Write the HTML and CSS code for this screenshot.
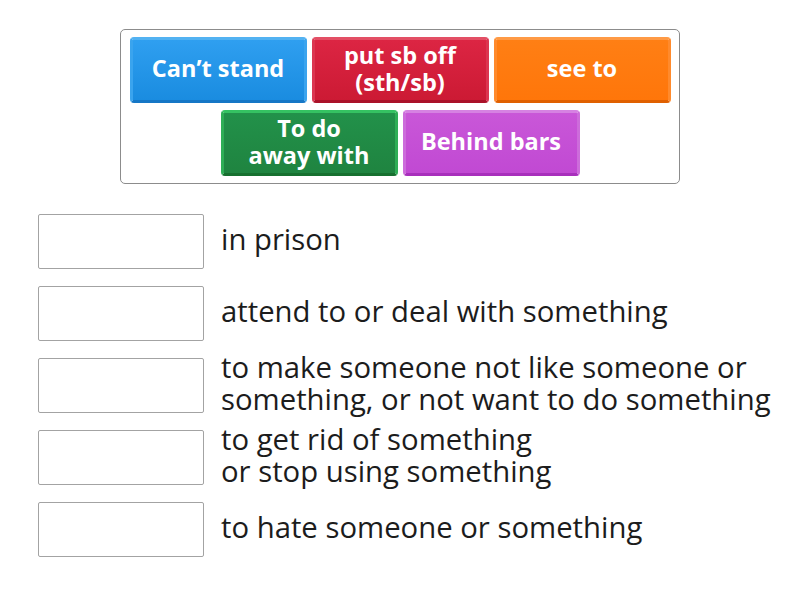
FILE: index.html
```html
<!DOCTYPE html>
<html>
<head>
<meta charset="utf-8">
<link rel="stylesheet" href="styles.css">
</head>
<body>
<div class="bank">
  <div class="tile blue"><span>Can’t stand</span></div>
  <div class="tile red"><span>put sb off<br>(sth/sb)</span></div>
  <div class="tile orange"><span>see to</span></div>
  <div class="tile green"><span>To do<br>away with</span></div>
  <div class="tile purple"><span>Behind bars</span></div>
</div>
<div class="rows">
  <div class="row"><div class="slot"></div><div class="def">in prison</div></div>
  <div class="row"><div class="slot"></div><div class="def">attend to or deal with something</div></div>
  <div class="row"><div class="slot"></div><div class="def">to make someone not like someone or<br>something, or not want to do something</div></div>
  <div class="row"><div class="slot"></div><div class="def">to get rid of something<br>or stop using something</div></div>
  <div class="row"><div class="slot"></div><div class="def">to hate someone or something</div></div>
</div>
</body>
</html>
```
FILE: styles.css
```css
html, body {
  margin: 0;
  padding: 0;
  background: #fff;
  font-family: "Open Sans", "Liberation Sans", sans-serif;
}
.bank {
  box-sizing: border-box;
  width: 560px;
  margin: 29px auto 0;
  padding: 7px 8px;
  border: 1px solid #8c8c8c;
  border-radius: 5px;
  display: flex;
  flex-wrap: wrap;
  justify-content: center;
  column-gap: 5px;
  row-gap: 7px;
}
.tile {
  box-sizing: border-box;
  width: 177px;
  height: 66px;
  border-radius: 4px;
  border: 3px solid;
  display: flex;
  align-items: center;
  justify-content: center;
  text-align: center;
  color: #fff;
  font-weight: 700;
  font-size: 23.5px;
  line-height: 27px;
}
.tile span { display: block; margin-top: -3px; }
.blue {
  background: linear-gradient(#2f9ff0, #1a8ce0);
  border-color: #52b2f2 #3aa4ee #1577c6 #3aa4ee;
}
.red {
  background: linear-gradient(#dc2543, #cc1a34);
  border-color: #e34f65 #dc3550 #aa1129 #dc3550;
}
.orange {
  background: linear-gradient(#ff7f14, #ff760a);
  border-color: #ff9a45 #ff8a2c #e06000 #ff8a2c;
}
.green {
  background: linear-gradient(#22914a, #1f8440);
  border-color: #35c262 #2eae56 #17702f #2eae56;
}
.purple {
  background: linear-gradient(#c957d8, #c149d3);
  border-color: #d682e2 #cd6cdb #a82fbc #cd6cdb;
}
.rows {
  margin-top: 30px;
  padding-left: 38px;
  display: flex;
  flex-direction: column;
  gap: 17px;
}
.row {
  display: flex;
  align-items: center;
  height: 55px;
}
.slot {
  box-sizing: border-box;
  width: 166px;
  height: 55px;
  border: 1px solid #a3a3a3;
  border-radius: 2px;
  flex: none;
}
.def {
  margin-left: 17px;
  font-size: 29.3px;
  line-height: 32px;
  color: #1c1c1c;
  white-space: nowrap;
  margin-top: -6px;
}
```
